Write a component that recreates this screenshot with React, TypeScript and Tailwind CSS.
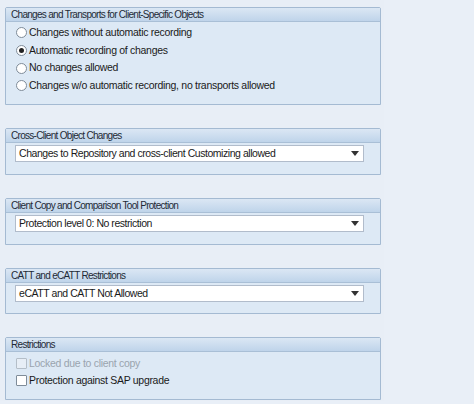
import React from "react";

const font = { fontFamily: '"Liberation Sans", Arial, sans-serif' };

const Panel = ({ title, h, children }: { title: string; h: string; children: React.ReactNode }) => (
  <div className={`w-[376px] ${h} border border-[#a4bad2] rounded-t-[2px] bg-[#dde9f5] flex flex-col`}>
    <div className="h-[14px] shrink-0 bg-gradient-to-b from-[#dbe7f4] to-[#bfd4ea] border-b border-[#a9bfd6] px-[5px] flex items-center text-[10px] tracking-[-0.7px] leading-none text-[#1e2a36]">
      {title}
    </div>
    {children}
  </div>
);

const Radio = ({ label, checked }: { label: string; checked?: boolean }) => (
  <div className="h-[17.7px] flex items-center">
    <span className="w-[11px] h-[11px] rounded-full border border-[#7f8c99] bg-white flex items-center justify-center mr-[2px]">
      {checked && <span className="w-[5px] h-[5px] rounded-full bg-[#222]" />}
    </span>
    <span className="text-[10.5px] tracking-[-0.3px] text-[#1a1a1a]">{label}</span>
  </div>
);

const Select = ({ value }: { value: string }) => (
  <div className="ml-[9px] mr-[16px] mt-[2px] h-[17px] bg-white border border-[#b1bccb] flex items-center pl-[3px] pr-[4px] text-[10.5px] tracking-[-0.45px] text-[#1a1a1a]">
    <span className="flex-1">{value}</span>
    <svg width="8" height="5" viewBox="0 0 8 5">
      <path d="M0 0 H8 L4 5 Z" fill="#333" />
    </svg>
  </div>
);

const Check = ({ label, disabled }: { label: string; disabled?: boolean }) => (
  <div className="h-[17px] flex items-center">
    <span
      className={`w-[11px] h-[11px] rounded-[1px] border mr-[2px] ${
        disabled ? "border-[#b4bec8] bg-[#e7eef6]" : "border-[#7f8c99] bg-white"
      }`}
    />
    <span className={`text-[10.5px] tracking-[-0.3px] ${disabled ? "text-[#9aa4ae]" : "text-[#1a1a1a]"}`}>{label}</span>
  </div>
);

export default function App() {
  return (
    <div className="w-[474px] h-[404px] bg-[#e9eff7] flex" style={font}>
      <div className="w-[384px] h-[401px] bg-[#e8eef6] pl-[5px] pt-[7px] flex flex-col gap-[23px]">
        <Panel title="Changes and Transports for Client-Specific Objects" h="h-[98px]">
          <div className="pl-[10px] pt-[2px]">
            <Radio label="Changes without automatic recording" />
            <Radio label="Automatic recording of changes" checked />
            <Radio label="No changes allowed" />
            <Radio label="Changes w/o automatic recording, no transports allowed" />
          </div>
        </Panel>
        <Panel title="Cross-Client Object Changes" h="h-[47px]">
          <Select value="Changes to Repository and cross-client Customizing allowed" />
        </Panel>
        <Panel title="Client Copy and Comparison Tool Protection" h="h-[47px]">
          <Select value="Protection level 0: No restriction" />
        </Panel>
        <Panel title="CATT and eCATT Restrictions" h="h-[46px]">
          <Select value="eCATT and CATT Not Allowed" />
        </Panel>
        <Panel title="Restrictions" h="h-[63px]">
          <div className="pl-[10px] pt-[3px]">
            <Check label="Locked due to client copy" disabled />
            <Check label="Protection against SAP upgrade" />
          </div>
        </Panel>
      </div>
    </div>
  );
}
